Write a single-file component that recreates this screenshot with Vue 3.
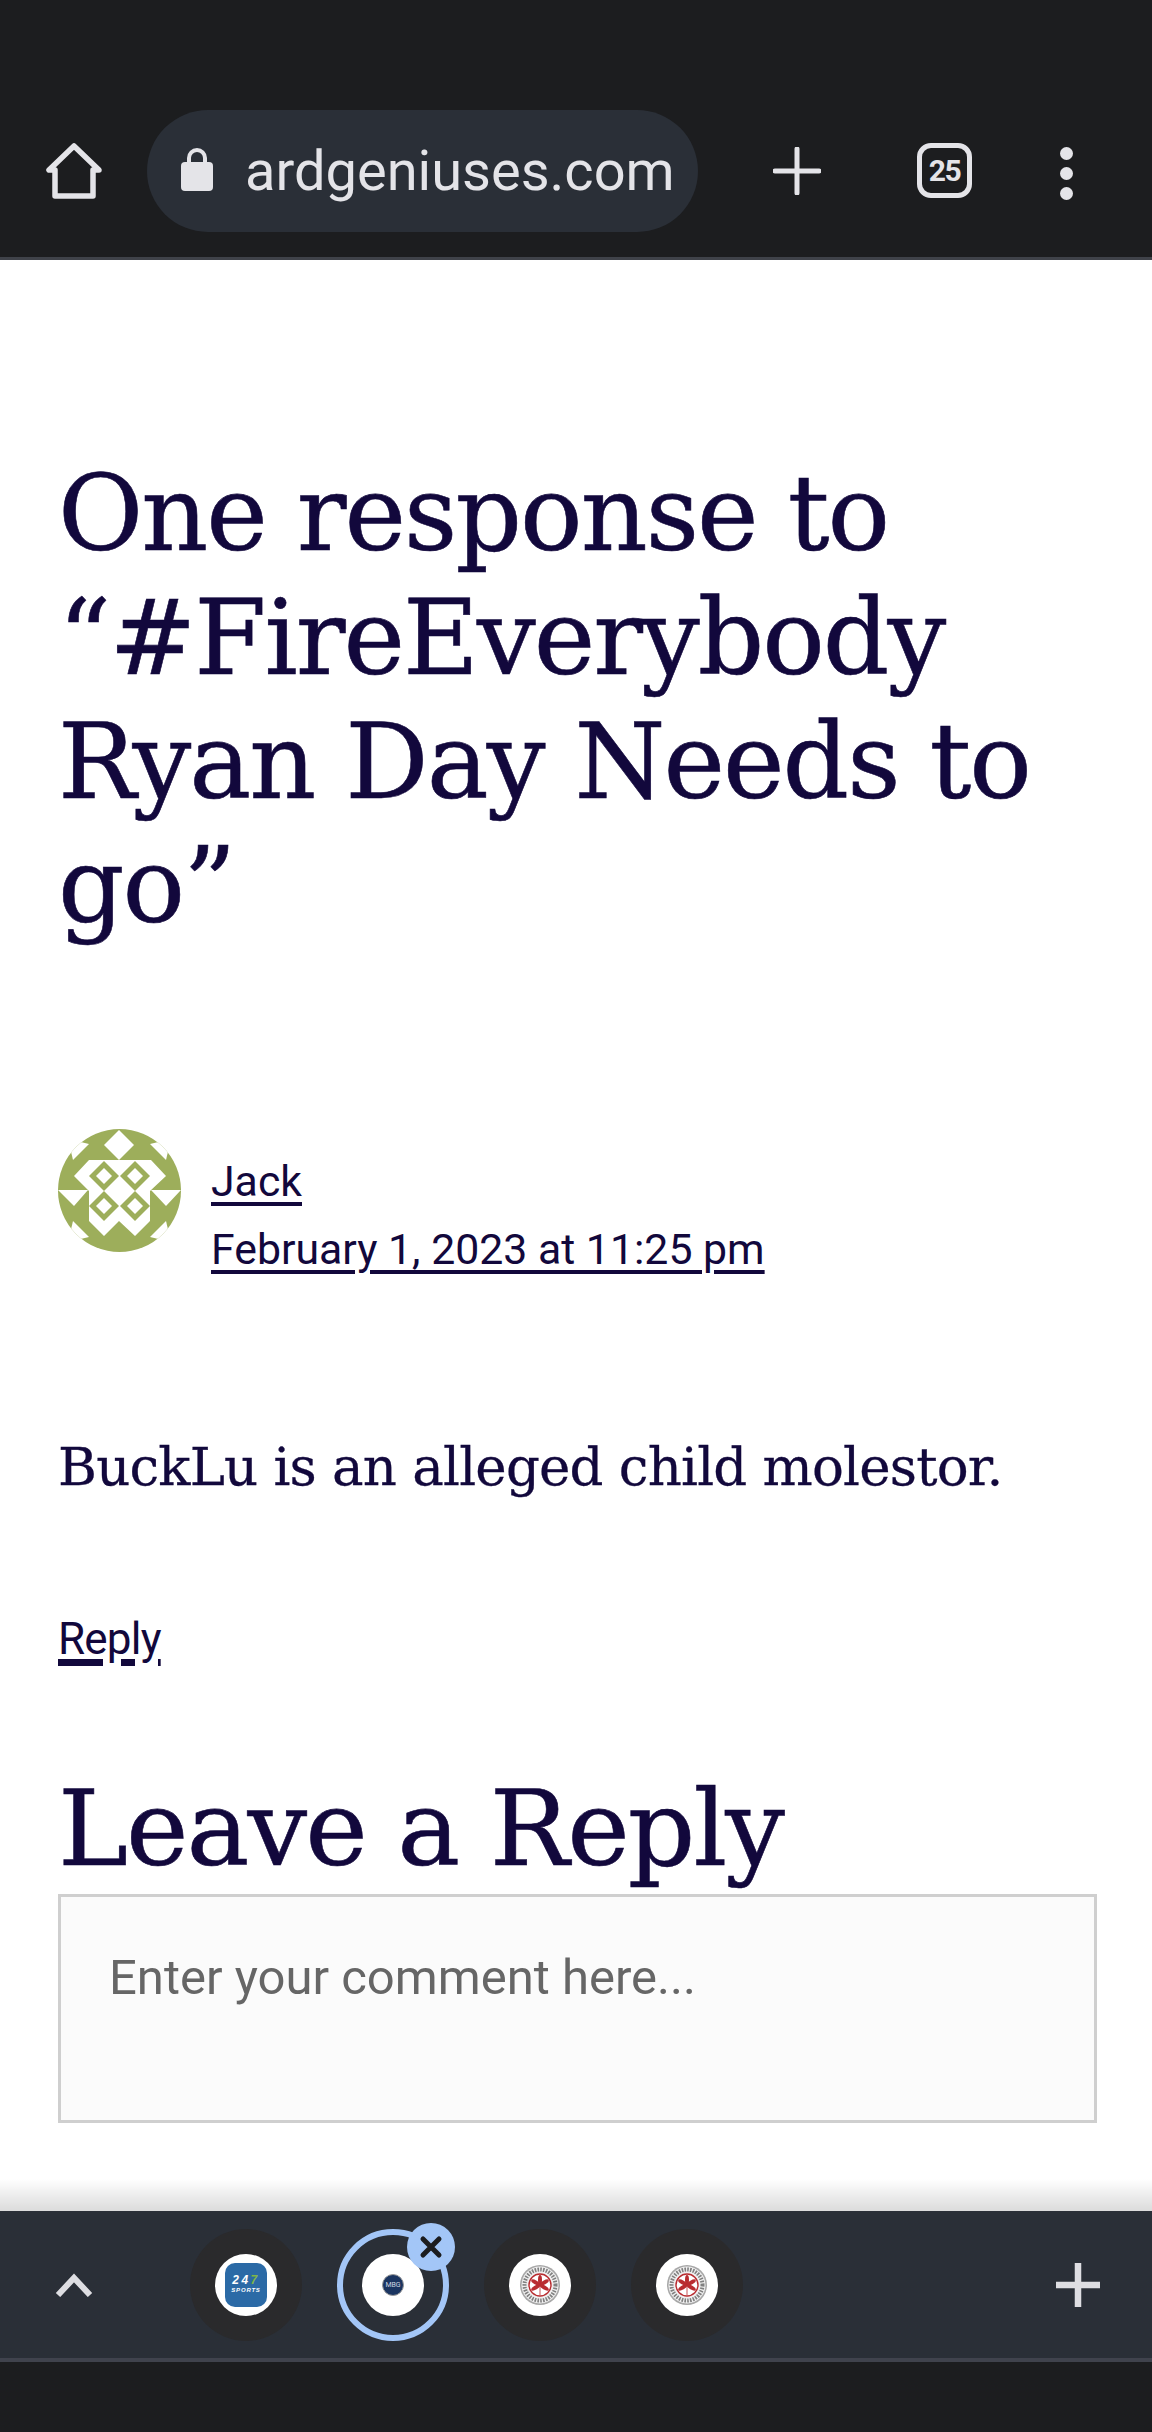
<template>
  <div class="page">
    <header class="toolbar">
      <svg class="home-icon" viewBox="0 0 56 56" fill="none" stroke="currentColor" stroke-width="5.5" stroke-linejoin="round">
        <path d="M28 3 L3 27 H9 V53 H47 V27 H53 Z" />
      </svg>
      <div class="address-pill">
        <svg class="lock-icon" viewBox="0 0 34 44" fill="currentColor">
          <path d="M9 17 V11 a8 8 0 0 1 16 0 V17" fill="none" stroke="currentColor" stroke-width="4" />
          <rect x="1" y="15" width="32" height="29" rx="4" />
        </svg>
        <span class="address-text">ardgeniuses.com</span>
      </div>
      <svg class="new-tab-icon" viewBox="0 0 48 48" stroke="currentColor" stroke-width="5" stroke-linecap="round">
        <line x1="24" y1="2" x2="24" y2="46" />
        <line x1="2" y1="24" x2="46" y2="24" />
      </svg>
      <div class="tab-count">25</div>
      <div class="menu-dots">
        <span></span>
        <span></span>
        <span></span>
      </div>
    </header>

    <main class="content">
      <h2 class="comments-title">One response to “#FireEverybody Ryan Day Needs to go”</h2>

      <div class="comment-meta">
        <svg class="avatar" viewBox="0 0 123 123">
          <defs>
            <clipPath id="avatar-clip">
              <circle cx="61.5" cy="61.5" r="61.5" />
            </clipPath>
          </defs>
          <g clip-path="url(#avatar-clip)">
            <rect width="123" height="123" fill="#9dae5b" />
            <g fill="#fff">
              <polygon points="61,1 76,16 61,31 46,16" />
              <polygon points="31,31 93,31 108,47 92,62 92,92 77,107 61,92 46,107 31,92 31,62 16,47" />
              <polygon points="0,61 30,61 16,77" />
              <polygon points="93,61 123,61 108,77" />
              <polygon points="10,10 31,15 15,31" />
              <polygon points="113,10 92,15 108,31" />
              <polygon points="10,113 15,92 31,108" />
              <polygon points="113,113 108,92 92,108" />
            </g>
            <g v-for="d in avatarDiamonds" :key="d.x + '-' + d.y">
              <polygon :points="diamond(d.x, d.y, 15)" fill="#9dae5b" />
              <polygon :points="diamond(d.x, d.y, 8)" fill="#fff" />
            </g>
          </g>
        </svg>
        <div class="comment-info">
          <a class="meta-link">Jack</a>
          <a class="meta-link">February 1, 2023 at 11:25 pm</a>
        </div>
      </div>

      <p class="comment-body">BuckLu is an alleged child molestor.</p>
      <a class="reply-link">Reply</a>

      <h2 class="reply-title">Leave a Reply</h2>
      <div class="comment-box">Enter your comment here...</div>
      <div class="bottom-shade"></div>
    </main>

    <section class="tab-strip">
      <svg class="chevron" viewBox="0 0 38 24" fill="none" stroke="currentColor" stroke-width="6">
        <path d="M3 22 L19 5 L35 22" />
      </svg>
      <div class="tabs">
        <div class="tab">
          <div class="favicon">
            <div class="logo-247">
              <span class="logo-num">24<span class="logo-seven">7</span></span>
              <span class="logo-sports">SPORTS</span>
            </div>
          </div>
        </div>
        <div class="tab tab-active">
          <div class="favicon">
            <div class="logo-mbg">MBG</div>
          </div>
          <div class="tab-close">
            <svg viewBox="0 0 24 24" fill="none" stroke="#1c1d1f" stroke-width="5" stroke-linecap="round">
              <path d="M4 4 L20 20 M20 4 L4 20" />
            </svg>
          </div>
        </div>
        <div class="tab" v-for="n in 2" :key="n">
          <div class="favicon">
            <svg class="logo-eleven" viewBox="0 0 44 44">
              <circle cx="22" cy="22" r="20" fill="#a8a8a8" />
              <circle cx="22" cy="22" r="18.5" fill="#efefef" />
              <circle cx="22" cy="22" r="15.5" fill="none" stroke="#808080" stroke-width="4" stroke-dasharray="1.6 1.2" />
              <circle cx="22" cy="22" r="11" fill="#fff" stroke="#b92c30" stroke-width="1.4" />
              <g fill="#b92c30">
                <ellipse v-for="a in leafAngles" :key="a" cx="22" cy="17" rx="2" ry="5" :transform="`rotate(${a} 22 22)`" />
              </g>
              <line x1="22" y1="22" x2="22" y2="32" stroke="#b92c30" stroke-width="0.8" />
            </svg>
          </div>
        </div>
      </div>
      <svg class="strip-plus" viewBox="0 0 44 44" fill="none" stroke="currentColor" stroke-width="6.5">
        <path d="M22 0 V44 M0 22 H44" />
      </svg>
    </section>
    <div class="nav-space"></div>
  </div>
</template>

<script setup>
const avatarDiamonds = [
  { x: 46, y: 47 },
  { x: 77, y: 47 },
  { x: 46, y: 77 },
  { x: 77, y: 77 }
]

const leafAngles = [-120, -60, 0, 60, 120]

const diamond = (x, y, r) => `${x},${y - r} ${x + r},${y} ${x},${y + r} ${x - r},${y}`
</script>

<style>
html,
body {
  margin: 0;
  background: #fff;
}
</style>

<style scoped>
.page {
  width: 1152px;
  height: 2432px;
  display: flex;
  flex-direction: column;
  overflow: hidden;
  background: #fff;
  color: #12083c;
  font-family: Roboto, sans-serif;
}

.toolbar {
  flex: none;
  box-sizing: border-box;
  height: 260px;
  padding: 110px 0 0 46px;
  display: flex;
  align-items: flex-start;
  background: #1c1d1f;
  border-bottom: 3px solid #3f4249;
  color: #e4e4e8;
}

.home-icon {
  width: 56px;
  height: 56px;
  margin-top: 33px;
}

.address-pill {
  box-sizing: border-box;
  width: 551px;
  height: 122px;
  margin-left: 45px;
  padding-left: 33px;
  display: flex;
  align-items: center;
  border-radius: 61px;
  background: #2a2f37;
}

.lock-icon {
  width: 34px;
  height: 44px;
  margin-bottom: 4px;
}

.address-text {
  margin-left: 31px;
  font-size: 56px;
  color: #e4e4e8;
}

.new-tab-icon {
  width: 48px;
  height: 48px;
  margin: 37px 0 0 75px;
}

.tab-count {
  box-sizing: border-box;
  width: 55px;
  height: 55px;
  margin: 33px 0 0 96px;
  display: flex;
  align-items: center;
  justify-content: center;
  border: 5px solid #e4e4e8;
  border-radius: 14px;
  font-size: 30px;
  font-weight: 700;
  letter-spacing: -1.5px;
}

.menu-dots {
  margin: 37px 0 0 88px;
  display: flex;
  flex-direction: column;
  gap: 7px;
}

.menu-dots span {
  width: 13px;
  height: 13px;
  border-radius: 50%;
  background: #e4e4e8;
}

.content {
  position: relative;
  flex: 1;
  min-height: 0;
  padding: 0 55px 0 58px;
}

.comments-title {
  margin: 192px 0 0;
  font-family: "DejaVu Serif", serif;
  font-size: 104px;
  line-height: 124px;
  font-weight: 400;
  letter-spacing: -2px;
  -webkit-text-stroke: 0.6px #12083c;
}

.comment-meta {
  margin-top: 181px;
  display: flex;
  align-items: flex-start;
}

.avatar {
  width: 123px;
  height: 123px;
  flex: none;
}

.comment-info {
  margin: 18px 0 0 30px;
  display: flex;
  flex-direction: column;
  align-items: flex-start;
}

.meta-link {
  font-size: 42.8px;
  line-height: 68px;
  text-decoration: underline;
  text-decoration-thickness: 4px;
  text-underline-offset: 6px;
}

.comment-body {
  margin: 144px 0 0;
  font-family: "DejaVu Serif", serif;
  font-size: 53px;
  line-height: 80px;
  letter-spacing: -0.8px;
  -webkit-text-stroke: 0.3px #12083c;
}

.reply-link {
  display: inline-block;
  margin-top: 102px;
  font-size: 44px;
  line-height: 60px;
  letter-spacing: -0.8px;
  text-decoration: underline;
  text-decoration-thickness: 7px;
  text-underline-offset: 5px;
}

.reply-title {
  margin: 98px 0 3px;
  font-family: "DejaVu Serif", serif;
  font-size: 105.6px;
  line-height: 124px;
  font-weight: 400;
  letter-spacing: -2px;
  -webkit-text-stroke: 0.6px #12083c;
}

.comment-box {
  box-sizing: border-box;
  height: 229px;
  padding: 53px 48px;
  background: #fbfbfb;
  border: 3px solid #cfcfcf;
  font-size: 49px;
  line-height: 56px;
  color: #666;
}

.bottom-shade {
  position: absolute;
  left: 0;
  right: 0;
  bottom: 0;
  height: 32px;
  background: linear-gradient(to bottom, rgba(0, 0, 0, 0), rgba(0, 0, 0, 0.14));
}

.tab-strip {
  flex: none;
  box-sizing: border-box;
  height: 151px;
  display: flex;
  align-items: center;
  background: #2a2f37;
  border-bottom: 4px solid #40434d;
  color: #dedee2;
}

.chevron {
  width: 38px;
  height: 24px;
  margin-left: 55px;
  flex: none;
}

.tabs {
  margin-left: 97px;
  display: flex;
  gap: 35px;
}

.tab {
  position: relative;
  width: 112px;
  height: 112px;
  display: flex;
  align-items: center;
  justify-content: center;
  border-radius: 50%;
  background: #2a2a2c;
}

.tab-active {
  box-sizing: border-box;
  background: transparent;
  border: 6px solid #a3c6f7;
}

.favicon {
  width: 62px;
  height: 62px;
  display: flex;
  align-items: center;
  justify-content: center;
  border-radius: 50%;
  background: #fff;
}

.tab-close {
  position: absolute;
  top: -12px;
  right: -12px;
  width: 48px;
  height: 48px;
  display: flex;
  align-items: center;
  justify-content: center;
  border-radius: 50%;
  background: #a3c6f7;
}

.tab-close svg {
  width: 24px;
  height: 24px;
}

.logo-247 {
  width: 42px;
  height: 44px;
  display: flex;
  flex-direction: column;
  align-items: center;
  justify-content: center;
  border-radius: 10px;
  background: #2b6aa6;
  color: #fff;
  font-family: "Liberation Sans", sans-serif;
  font-style: italic;
  font-weight: 700;
}

.logo-num {
  font-size: 12px;
  line-height: 11px;
  letter-spacing: 2.5px;
}

.logo-seven {
  color: #7fb54a;
}

.logo-sports {
  font-size: 6px;
  line-height: 9px;
  letter-spacing: 0.8px;
}

.logo-mbg {
  box-sizing: border-box;
  width: 22px;
  height: 22px;
  display: flex;
  align-items: center;
  justify-content: center;
  border-radius: 50%;
  border: 1px solid #9a9a9a;
  background: #1b3561;
  color: #cdd5e2;
  font-size: 7px;
}

.logo-eleven {
  width: 44px;
  height: 44px;
}

.strip-plus {
  width: 44px;
  height: 44px;
  margin-left: auto;
  margin-right: 52px;
  flex: none;
}

.nav-space {
  flex: none;
  height: 70px;
  background: #1c1d1f;
}
</style>
